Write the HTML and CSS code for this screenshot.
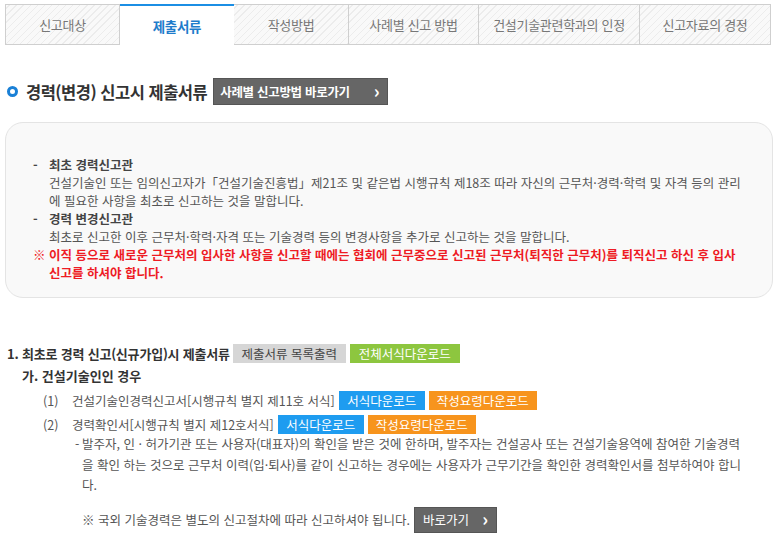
FILE: index.html
```html
<!DOCTYPE html>
<html lang="ko">
<head>
<meta charset="utf-8">
<link rel="stylesheet" href="styles.css">
</head>
<body>
<div class="page">
  <ul class="tabs">
    <li class="tab w115">신고대상</li>
    <li class="tab active w114">제출서류</li>
    <li class="tab w115">작성방법</li>
    <li class="tab w130">사례별 신고 방법</li>
    <li class="tab w161">건설기술관련학과의 인정</li>
    <li class="tab w131">신고자료의 경정</li>
  </ul>

  <div class="title-row">
    <span class="bullet"></span>
    <h2 class="title">경력(변경) 신고시 제출서류</h2>
    <a class="btn-dark wide">사례별 신고방법 바로가기<span class="chev">›</span></a>
  </div>

  <div class="info-box">
    <dl class="defs">
      <dt><span class="mark">-</span>최초 경력신고관</dt>
      <dd>건설기술인 또는 임의신고자가「건설기술진흥법」제21조 및 같은법 시행규칙 제18조 따라 자신의 근무처·경력·학력 및 자격 등의 관리에 필요한 사항을 최초로 신고하는 것을 말합니다.</dd>
      <dt><span class="mark">-</span>경력 변경신고관</dt>
      <dd>최초로 신고한 이후 근무처·학력·자격 또는 기술경력 등의 변경사항을 추가로 신고하는 것을 말합니다.</dd>
    </dl>
    <p class="warn"><span class="mark">※</span>이직 등으로 새로운 근무처의 입사한 사항을 신고할 때에는 협회에 근무중으로 신고된 근무처(퇴직한 근무처)를 퇴직신고 하신 후 입사신고를 하셔야 합니다.</p>
  </div>

  <div class="section">
    <div class="sec-head">
      <h3 class="sec-title">1. 최초로 경력 신고(신규가입)시 제출서류</h3>
      <a class="tag gray">제출서류 목록출력</a>
      <a class="tag green">전체서식다운로드</a>
    </div>
    <h4 class="sub-title">가. 건설기술인인 경우</h4>
    <div class="item">
      <span class="num">(1)</span>
      <span class="item-text">건설기술인경력신고서[시행규칙 별지 제11호 서식]</span>
      <a class="tag blue">서식다운로드</a>
      <a class="tag orange">작성요령다운로드</a>
    </div>
    <div class="item">
      <span class="num">(2)</span>
      <span class="item-text">경력확인서[시행규칙 별지 제12호서식]</span>
      <a class="tag blue">서식다운로드</a>
      <a class="tag orange">작성요령다운로드</a>
    </div>
    <p class="note"><span class="dash">-</span>발주자, 인 · 허가기관 또는 사용자(대표자)의 확인을 받은 것에 한하며, 발주자는 건설공사 또는 건설기술용역에 참여한 기술경력을 확인 하는 것으로 근무처 이력(입·퇴사)를 같이 신고하는 경우에는 사용자가 근무기간을 확인한 경력확인서를 첨부하여야 합니다.</p>
    <p class="note2">※ 국외 기술경력은 별도의 신고절차에 따라 신고하셔야 됩니다. <a class="btn-dark small">바로가기<span class="chev">›</span></a></p>
  </div>
</div>
</body>
</html>
```
FILE: styles.css
```css
* { box-sizing: border-box; }
html, body { margin: 0; padding: 0; background: #fff; }
body {
  font-family: "Noto Sans CJK KR", "Noto Sans", sans-serif;
  color: #555;
  font-size: 12.5px;
}
.page { width: 777px; padding: 4px 0 0 5px; }

.tabs {
  list-style: none; margin: 0; padding: 0;
  display: flex; height: 41px;
}
.tab {
  height: 41px;
  display: flex; align-items: center; justify-content: center;
  border: 1px solid #cfcfcf; border-left: none;
  background-color: #f7f7f7;
  background-image: repeating-linear-gradient(135deg, #f9f9f9 0 2px, #ececec 2px 3px, #f9f9f9 3px 5px);
  color: #777; font-size: 13px; letter-spacing: -0.3px;
}
.tab:first-child { border-left: 1px solid #cfcfcf; }
.tab.active {
  background: #fff;
  border: none;
  border-top: 2px solid #1b8ee4;
  color: #1f7ccb; font-weight: bold; font-size: 13.5px;
}
.w115 { width: 115px; } .w114 { width: 114px; } .w130 { width: 130px; }
.w161 { width: 161px; } .w131 { width: 131px; }

.title-row {
  display: flex; align-items: center;
  margin-top: 33px; height: 27px;
  padding-left: 2px;
}
.bullet {
  width: 11px; height: 11px; border-radius: 50%;
  border: 3px solid #1a80d6; background: #fff;
  margin-right: 8px;
}
.title {
  margin: 0; font-size: 16.5px; font-weight: bold; color: #333;
  letter-spacing: -0.5px;
}
.btn-dark {
  display: inline-flex; align-items: center; justify-content: space-between;
  background: #666; color: #fff; font-weight: bold;
  border: 1px solid #555;
  text-decoration: none;
}
.btn-dark.wide {
  width: 175px; height: 27px; margin-left: 6px;
  padding: 0 8px 0 6px; font-size: 12.5px; letter-spacing: -0.3px;
}
.chev { font-size: 18px; font-weight: bold; line-height: 1; margin-top: -3px; }

.info-box {
  margin-top: 17px; width: 768px;
  border: 1px solid #e4e4e4; border-radius: 18px;
  background: #f9f9f9;
  padding: 33px 31px 15px 27px;
  line-height: 18px;
}
.defs { margin: 0; }
.defs dt { font-weight: bold; color: #444; display: flex; }
.defs dd { margin: 0 0 0 16px; }
.mark { width: 16px; flex: none; display: inline-block; }
.warn {
  margin: 0; color: #ee1b24; font-weight: bold;
  display: flex;
}

.section { margin-top: 46px; padding-left: 2px; }
.sec-head { display: flex; align-items: center; height: 19px; }
.sec-title { margin: 0; font-size: 13px; font-weight: bold; color: #333; margin-right: 3px; letter-spacing: -0.2px; }
.tag {
  display: inline-flex; align-items: center; justify-content: center;
  height: 19px; padding: 0 4px;
  font-size: 12.5px; color: #fff; text-decoration: none;
  margin-right: 4px; white-space: nowrap;
}
.tag.gray { background: #d6d6d6; color: #444; width: 113px; }
.tag.green { background: #8dc63f; width: 110px; }
.tag.blue { background: #1e9cf0; width: 86px; }
.tag.orange { background: #f7941d; width: 108px; }

.sub-title { margin: 3px 0 0 15px; font-size: 13px; font-weight: bold; color: #333; line-height: 19px; }
.item { display: flex; align-items: center; margin-top: 5.5px; padding-left: 36px; height: 19px; }
.num { width: 29px; }
.item-text { margin-right: 4px; }

.note {
  margin: 0 29px 0 68px; line-height: 20.5px;
  display: flex;
}
.dash { width: 7px; flex: none; }
.note2 { margin: 11px 0 0 75px; display: flex; align-items: center; height: 26px; }
.btn-dark.small {
  width: 83px; height: 26px; margin-left: 4px;
  padding: 0 8px; font-size: 12.5px; font-weight: normal;
}
```
